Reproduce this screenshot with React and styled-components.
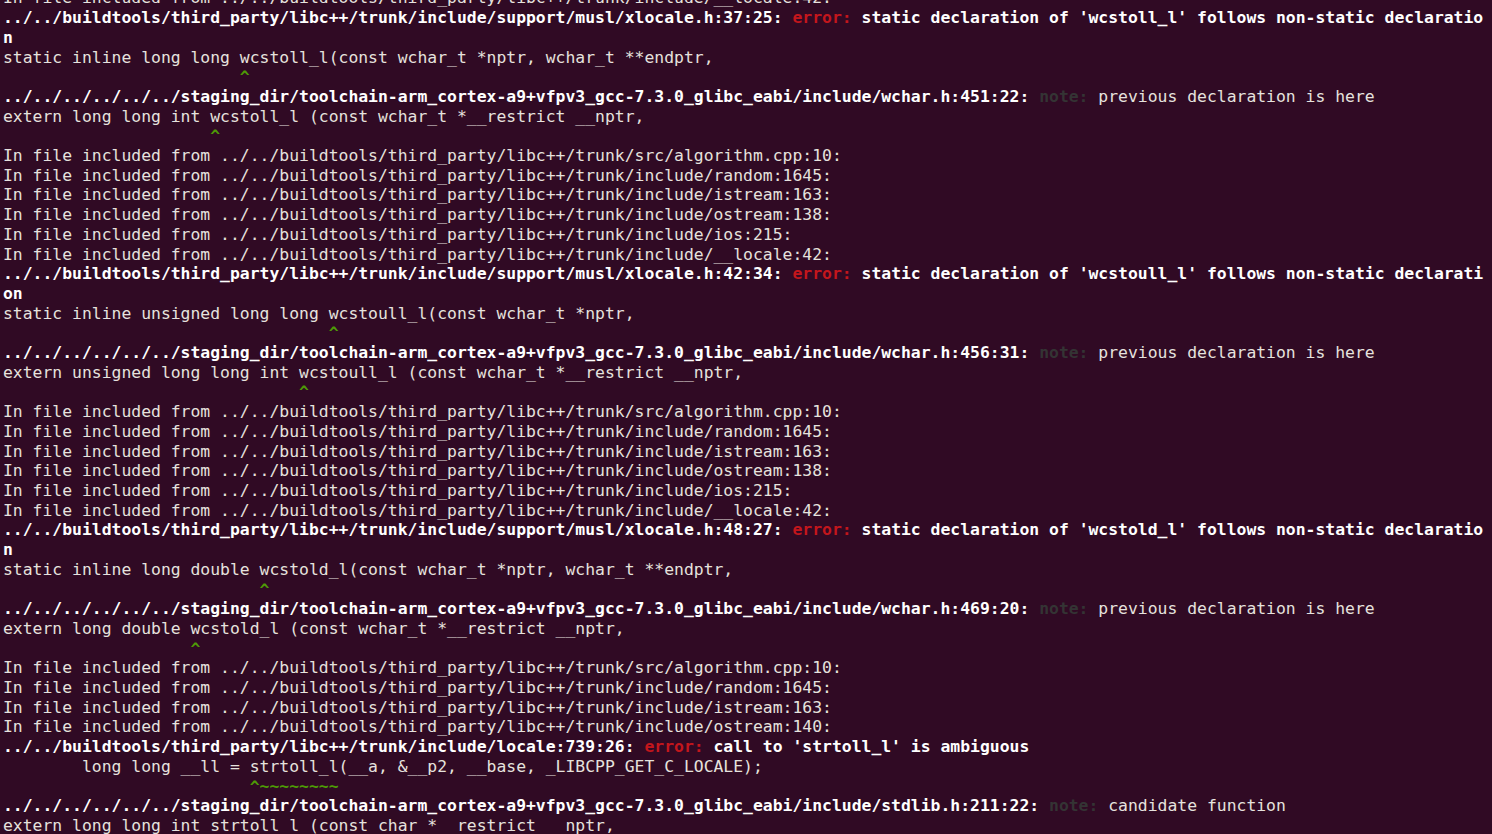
import React from 'react';
import styled, { createGlobalStyle } from 'styled-components';

const Global = createGlobalStyle`
  html, body { margin: 0; padding: 0; background: #300a24; overflow: hidden; }
  #root { height: 834px; }
`;

const Terminal = styled.div`
  width: 1492px;
  height: 834px;
  overflow: hidden;
  background: #300a24;
  box-sizing: border-box;
  padding-left: 3px;
`;

const Screen = styled.pre`
  margin: -11.6px 0 0 0;
  font-family: "DejaVu Sans Mono", monospace;
  font-size: 16.4px;
  line-height: 19.71px;
  color: #e9e5e1;
  white-space: pre;
`;

const Line = styled.div`
  height: 19.71px;
`;

const COLORS = {
  p: '#e6e2de',
  b: '#ffffff',
  e: '#c3161c',
  n: '#343434',
  c: '#4e9a06',
};

const Seg = styled.span`
  color: ${(p) => COLORS[p.$k]};
  font-weight: ${(p) => (p.$k === 'p' ? 400 : 700)};
`;

const LIBCXX = '../../buildtools/third_party/libc++/trunk/';
const STAGING = '../../../../../../staging_dir/toolchain-arm_cortex-a9+vfpv3_gcc-7.3.0_glibc_eabi/include/';

const inc = (path) => [['p', 'In file included from ' + LIBCXX + path]];

const includes = (last) => [
  inc('src/algorithm.cpp:10:'),
  inc('include/random:1645:'),
  inc('include/istream:163:'),
  inc('include/ostream:' + last + ':'),
];

const lines = [
  inc('include/__locale:42:'),
  [['b', LIBCXX + 'include/support/musl/xlocale.h:37:25: '], ['e', 'error: '], ['b', "static declaration of 'wcstoll_l' follows non-static declaratio"]],
  [['b', 'n']],
  [['p', 'static inline long long wcstoll_l(const wchar_t *nptr, wchar_t **endptr,']],
  [['c', '                        ^']],
  [['b', STAGING + 'wchar.h:451:22: '], ['n', 'note: '], ['p', 'previous declaration is here']],
  [['p', 'extern long long int wcstoll_l (const wchar_t *__restrict __nptr,']],
  [['c', '                     ^']],
  ...includes('138'),
  inc('include/ios:215:'),
  inc('include/__locale:42:'),
  [['b', LIBCXX + 'include/support/musl/xlocale.h:42:34: '], ['e', 'error: '], ['b', "static declaration of 'wcstoull_l' follows non-static declarati"]],
  [['b', 'on']],
  [['p', 'static inline unsigned long long wcstoull_l(const wchar_t *nptr,']],
  [['c', '                                 ^']],
  [['b', STAGING + 'wchar.h:456:31: '], ['n', 'note: '], ['p', 'previous declaration is here']],
  [['p', 'extern unsigned long long int wcstoull_l (const wchar_t *__restrict __nptr,']],
  [['c', '                              ^']],
  ...includes('138'),
  inc('include/ios:215:'),
  inc('include/__locale:42:'),
  [['b', LIBCXX + 'include/support/musl/xlocale.h:48:27: '], ['e', 'error: '], ['b', "static declaration of 'wcstold_l' follows non-static declaratio"]],
  [['b', 'n']],
  [['p', 'static inline long double wcstold_l(const wchar_t *nptr, wchar_t **endptr,']],
  [['c', '                          ^']],
  [['b', STAGING + 'wchar.h:469:20: '], ['n', 'note: '], ['p', 'previous declaration is here']],
  [['p', 'extern long double wcstold_l (const wchar_t *__restrict __nptr,']],
  [['c', '                   ^']],
  ...includes('140'),
  [['b', LIBCXX + 'include/locale:739:26: '], ['e', 'error: '], ['b', "call to 'strtoll_l' is ambiguous"]],
  [['p', '        long long __ll = strtoll_l(__a, &__p2, __base, _LIBCPP_GET_C_LOCALE);']],
  [['c', '                         ^~~~~~~~~']],
  [['b', STAGING + 'stdlib.h:211:22: '], ['n', 'note: '], ['p', 'candidate function']],
  [['p', 'extern long long int strtoll_l (const char *__restrict __nptr,']],
];

export default function App() {
  return (
    <>
      <Global />
      <Terminal>
        <Screen>
          {lines.map((segs, i) => (
            <Line key={i}>
              {segs.map(([k, t], j) => (
                <Seg key={j} $k={k}>{t}</Seg>
              ))}
            </Line>
          ))}
        </Screen>
      </Terminal>
    </>
  );
}
